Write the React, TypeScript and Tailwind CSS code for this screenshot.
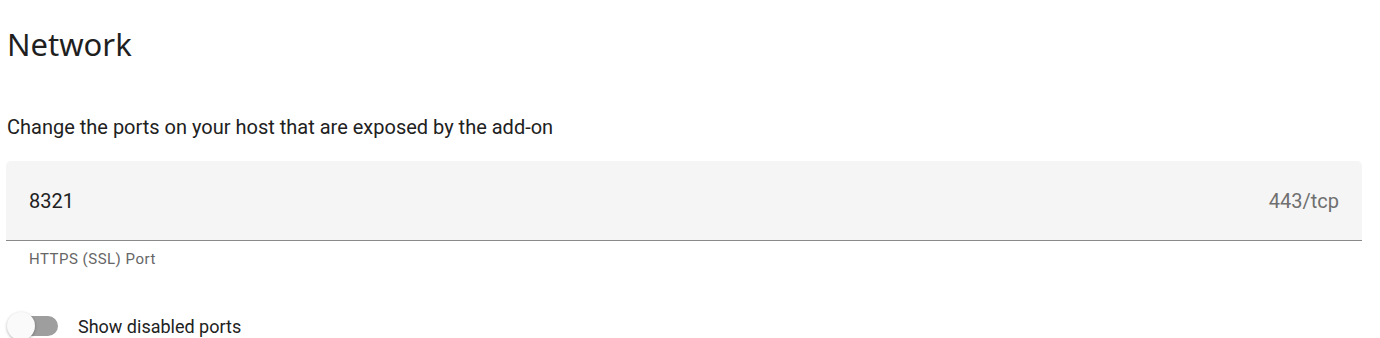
import React, { useState } from "react";

const App: React.FC = () => {
  const [showDisabled, setShowDisabled] = useState(false);

  return (
    <div className="min-h-screen bg-white pl-[6px] pr-[18px] font-['Roboto',sans-serif] text-[#212121]">
      {/* Heading */}
      <h1 className="pt-[24px] pl-[1px] text-[31px] leading-[40px] font-normal font-['Noto_Sans',sans-serif] text-[#1f1f1f]">
        Network
      </h1>

      {/* Description */}
      <p className="mt-[51px] pl-[1px] text-[20px] leading-[24px] text-[#212121]">
        Change the ports on your host that are exposed by the add-on
      </p>

      {/* Port field */}
      <div className="mt-[22px]">
        <div className="flex h-[80px] items-center justify-between rounded-t-[5px] border-b border-[#8a8a8a] bg-[#f5f5f5] pl-[23px] pr-[23px]">
          <span className="text-[20px] text-[#212121]">8321</span>
          <span className="text-[20px] text-[#6f6f6f]">443/tcp</span>
        </div>
        <div className="pl-[23px] pt-[8px] text-[15px] leading-[20px] tracking-[0.5px] text-[#666666]">
          HTTPS (SSL) Port
        </div>
      </div>

      {/* Toggle */}
      <div className="mt-[43px] flex items-center gap-[20px]">
        <button
          type="button"
          onClick={() => setShowDisabled(!showDisabled)}
          className="relative h-[28px] w-[52px] shrink-0"
          aria-label="Show disabled ports"
        >
          <span className="absolute left-[6px] top-[4px] h-[20px] w-[46px] rounded-full bg-[#9e9e9e]" />
          <span className="absolute left-[1px] top-0 h-[28px] w-[28px] rounded-full bg-[#fafafa] shadow-[0_1px_3px_rgba(0,0,0,0.3)]" />
        </button>
        <span className="text-[18px] text-[#212121]">Show disabled ports</span>
      </div>
    </div>
  );
};

export default App;
